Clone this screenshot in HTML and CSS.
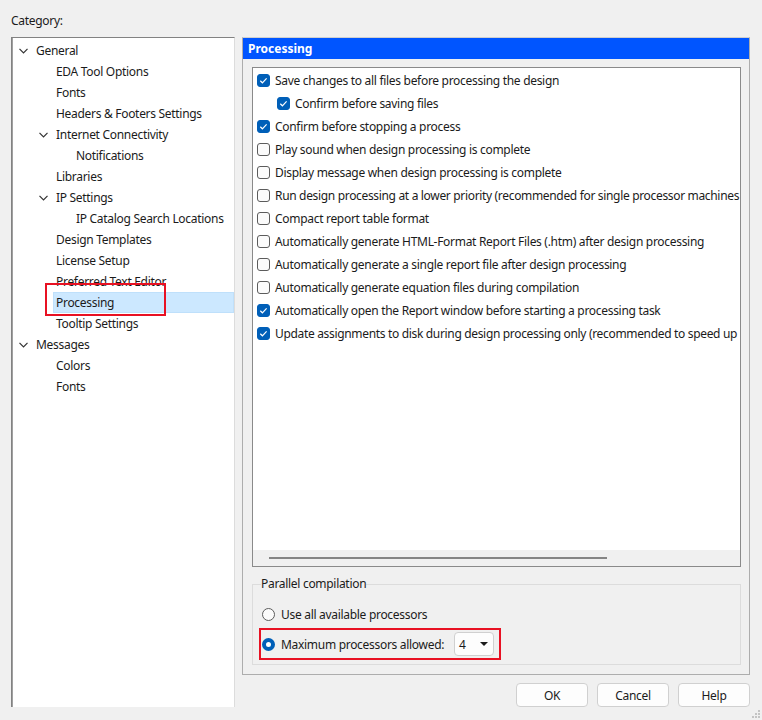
FILE: index.html
```html
<!DOCTYPE html>
<html lang="en">
<head>
  <meta charset="utf-8">
  <title>Options - Processing</title>
  <link rel="stylesheet" href="styles.css">
</head>
<body>
  <div class="dialog">
    <div class="caption">Category:</div>

    <div class="layout">
      <div class="tree">
        <div class="node lvl1"><span class="twisty"><svg width="9" height="6" viewBox="0 0 9 6"><polyline points="0.5,0.8 4.5,4.8 8.5,0.8"/></svg></span><span class="label">General</span></div>
        <div class="node lvl2"><span class="twisty"></span><span class="label">EDA Tool Options</span></div>
        <div class="node lvl2"><span class="twisty"></span><span class="label">Fonts</span></div>
        <div class="node lvl2"><span class="twisty"></span><span class="label">Headers &amp; Footers Settings</span></div>
        <div class="node lvl2"><span class="twisty"><svg width="9" height="6" viewBox="0 0 9 6"><polyline points="0.5,0.8 4.5,4.8 8.5,0.8"/></svg></span><span class="label">Internet Connectivity</span></div>
        <div class="node lvl3"><span class="twisty"></span><span class="label">Notifications</span></div>
        <div class="node lvl2"><span class="twisty"></span><span class="label">Libraries</span></div>
        <div class="node lvl2"><span class="twisty"><svg width="9" height="6" viewBox="0 0 9 6"><polyline points="0.5,0.8 4.5,4.8 8.5,0.8"/></svg></span><span class="label">IP Settings</span></div>
        <div class="node lvl3"><span class="twisty"></span><span class="label">IP Catalog Search Locations</span></div>
        <div class="node lvl2"><span class="twisty"></span><span class="label">Design Templates</span></div>
        <div class="node lvl2"><span class="twisty"></span><span class="label">License Setup</span></div>
        <div class="node lvl2"><span class="twisty"></span><span class="label">Preferred Text Editor</span></div>
        <div class="node lvl2 selected"><span class="twisty"></span><span class="label">Processing</span></div>
        <div class="node lvl2"><span class="twisty"></span><span class="label">Tooltip Settings</span></div>
        <div class="node lvl1"><span class="twisty"><svg width="9" height="6" viewBox="0 0 9 6"><polyline points="0.5,0.8 4.5,4.8 8.5,0.8"/></svg></span><span class="label">Messages</span></div>
        <div class="node lvl2"><span class="twisty"></span><span class="label">Colors</span></div>
        <div class="node lvl2"><span class="twisty"></span><span class="label">Fonts</span></div>

        <div class="mark tree-mark"></div>
      </div>

      <div class="panel">
        <div class="panel-head">Processing</div>
        <div class="panel-body">
          <div class="list">
            <div class="checks">
              <div class="check on"><span class="box"><svg viewBox="0 0 13 13"><polyline points="3.3,6.8 5.4,8.8 9.6,4.4"/></svg></span>Save changes to all files before processing the design</div>
              <div class="check on sub"><span class="box"><svg viewBox="0 0 13 13"><polyline points="3.3,6.8 5.4,8.8 9.6,4.4"/></svg></span>Confirm before saving files</div>
              <div class="check on"><span class="box"><svg viewBox="0 0 13 13"><polyline points="3.3,6.8 5.4,8.8 9.6,4.4"/></svg></span>Confirm before stopping a process</div>
              <div class="check"><span class="box"></span>Play sound when design processing is complete</div>
              <div class="check"><span class="box"></span>Display message when design processing is complete</div>
              <div class="check long"><span class="box"></span>Run design processing at a lower priority (recommended for single processor machines</div>
              <div class="check"><span class="box"></span>Compact report table format</div>
              <div class="check"><span class="box"></span>Automatically generate HTML-Format Report Files (.htm) after design processing</div>
              <div class="check"><span class="box"></span>Automatically generate a single report file after design processing</div>
              <div class="check"><span class="box"></span>Automatically generate equation files during compilation</div>
              <div class="check on"><span class="box"><svg viewBox="0 0 13 13"><polyline points="3.3,6.8 5.4,8.8 9.6,4.4"/></svg></span>Automatically open the Report window before starting a processing task</div>
              <div class="check on long"><span class="box"><svg viewBox="0 0 13 13"><polyline points="3.3,6.8 5.4,8.8 9.6,4.4"/></svg></span>Update assignments to disk during design processing only (recommended to speed up</div>
            </div>
            <div class="hscroll"><div class="thumb"></div></div>
          </div>

          <fieldset class="group">
            <legend>Parallel compilation</legend>
            <div class="radio-row"><span class="radio"></span>Use all available processors</div>
            <div class="radio-row marked"><span class="radio on"></span>Maximum processors allowed:<span class="combo">4<svg width="8" height="4" viewBox="0 0 8 4"><polygon points="0,0 8,0 4,4"/></svg></span></div>
          </fieldset>
        </div>
      </div>

      <div class="buttons">
        <button>OK</button>
        <button>Cancel</button>
        <button>Help</button>
      </div>
    </div>
  </div>

  <svg class="grip" width="10" height="10" viewBox="0 0 10 10">
    <rect x="7" y="1" width="2" height="2"/>
    <rect x="4" y="4" width="2" height="2"/>
    <rect x="7" y="4" width="2" height="2"/>
    <rect x="1" y="7" width="2" height="2"/>
    <rect x="4" y="7" width="2" height="2"/>
    <rect x="7" y="7" width="2" height="2"/>
  </svg>
</body>
</html>
```

FILE: styles.css
```css
html, body {
  margin: 0;
  background: #f0f0f0;
}
body {
  font-family: "Noto Sans", "Open Sans", sans-serif;
  font-size: 12px;
  letter-spacing: -0.3px;
  color: #1b1b1b;
}
.dialog {
  padding: 12px 12px 0 11px;
}
.caption {
  height: 25px;
  line-height: 18px;
}
.layout {
  display: grid;
  grid-template-columns: 224px 508px;
  grid-template-rows: 638px 24px;
  column-gap: 7px;
  row-gap: 8px;
}

/* tree */
.tree {
  grid-row: 1 / 3;
  position: relative;
  background: #fff;
  border: 1px solid #dcdcdc;
  border-top-color: #828282;
  border-left-color: #828282;
  box-shadow: inset 1px 0 0 #a0a0a0;
  padding: 2px 0 0 0;
  height: 671px;
  box-sizing: border-box;
}
.node {
  display: flex;
  align-items: center;
  height: 21px;
  padding-left: 4px;
}
.node.lvl2 { padding-left: 24px; }
.node.lvl3 { padding-left: 44px; }
.twisty {
  width: 20px;
  display: flex;
  align-items: center;
}
.twisty svg {
  margin-left: 3px;
}
.twisty polyline {
  fill: none;
  stroke: #333;
  stroke-width: 1.2;
}
.label {
  white-space: nowrap;
}
.node.selected .label {
  flex: 1;
  height: 21px;
  line-height: 19px;
  margin-left: -3px;
  padding-left: 2px;
  background: #cce8ff;
  border: 1px solid #bfe0fb;
  box-sizing: border-box;
}
.mark {
  border: 2px solid #e81123;
  box-sizing: border-box;
}
.tree-mark {
  position: absolute;
  left: 33px;
  top: 245px;
  width: 121px;
  height: 33px;
}

/* right panel */
.panel {
  border: 1px solid #adadad;
  border-top-color: #cfcfcf;
  box-sizing: border-box;
  display: flex;
  flex-direction: column;
}
.panel-head {
  background: #0055ff;
  color: #fff;
  font-weight: bold;
  height: 21px;
  line-height: 22px;
  padding-left: 5px;
  letter-spacing: 0;
}
.panel-body {
  padding: 8px 8px 0 9px;
}
.list {
  height: 500px;
  box-sizing: border-box;
  border: 1px solid #8a8a8a;
  background: #fff;
  display: flex;
  flex-direction: column;
}
.checks {
  flex: 1;
  overflow: hidden;
  padding-top: 1px;
}
.check {
  display: flex;
  align-items: center;
  height: 23px;
  padding-left: 4px;
  white-space: nowrap;
}
.check.sub {
  padding-left: 24px;
}
.check.long {
  letter-spacing: -0.33px;
}
.box {
  flex: none;
  width: 13px;
  height: 13px;
  box-sizing: border-box;
  border: 1px solid #5c5c5c;
  border-radius: 3px;
  background: #fbfbfb;
  margin-right: 5px;
}
.check.on .box {
  background: #005fb8;
  border-color: #005fb8;
}
.box svg {
  display: block;
  width: 13px;
  height: 13px;
  margin: -1px;
}
.box polyline {
  fill: none;
  stroke: #fff;
  stroke-width: 1.2;
}
.hscroll {
  height: 16px;
  background: #f0f0f0;
  padding-top: 7px;
  box-sizing: border-box;
}
.thumb {
  margin-left: 16px;
  width: 338px;
  height: 2px;
  background: #858585;
}

/* parallel compilation */
.group {
  margin: 8px 0 0 0;
  padding: 13px 0 0 9px;
  height: 90px;
  box-sizing: border-box;
  border: 1px solid #dcdcdc;
}
.group legend {
  padding: 0;
  margin-left: -1px;
  line-height: 18px;
}
.radio-row {
  display: flex;
  align-items: center;
  height: 16px;
  white-space: nowrap;
}
.radio {
  width: 13px;
  height: 13px;
  box-sizing: border-box;
  border: 1px solid #5c5c5c;
  border-radius: 50%;
  background: #fbfbfb;
  margin-right: 6px;
}
.radio.on {
  border: 4px solid #005fb8;
  background: #fff;
}
.radio-row.marked {
  margin: 6px 0 0 -3px;
  width: 242px;
  height: 32px;
  padding: 0 5px 0 1px;
  box-sizing: border-box;
  border: 2px solid #e81123;
}
.combo {
  margin-left: auto;
  width: 40px;
  height: 24px;
  box-sizing: border-box;
  border: 1px solid #d0d0d0;
  border-radius: 4px;
  background: #fdfdfd;
  display: flex;
  align-items: center;
  justify-content: space-between;
  padding: 0 5px 0 4px;
}
.combo polygon {
  fill: #1b1b1b;
}

/* buttons */
.buttons {
  grid-column: 2;
  display: flex;
  justify-content: flex-end;
  gap: 9px;
}
button {
  width: 72px;
  height: 24px;
  font: inherit;
  letter-spacing: inherit;
  color: #1b1b1b;
  background: #fdfdfd;
  border: 1px solid #d0d0d0;
  border-radius: 4px;
  padding: 0;
}

.grip {
  position: absolute;
  right: 1px;
  bottom: 1px;
}
.grip rect {
  fill: #c4c4c4;
}
```
